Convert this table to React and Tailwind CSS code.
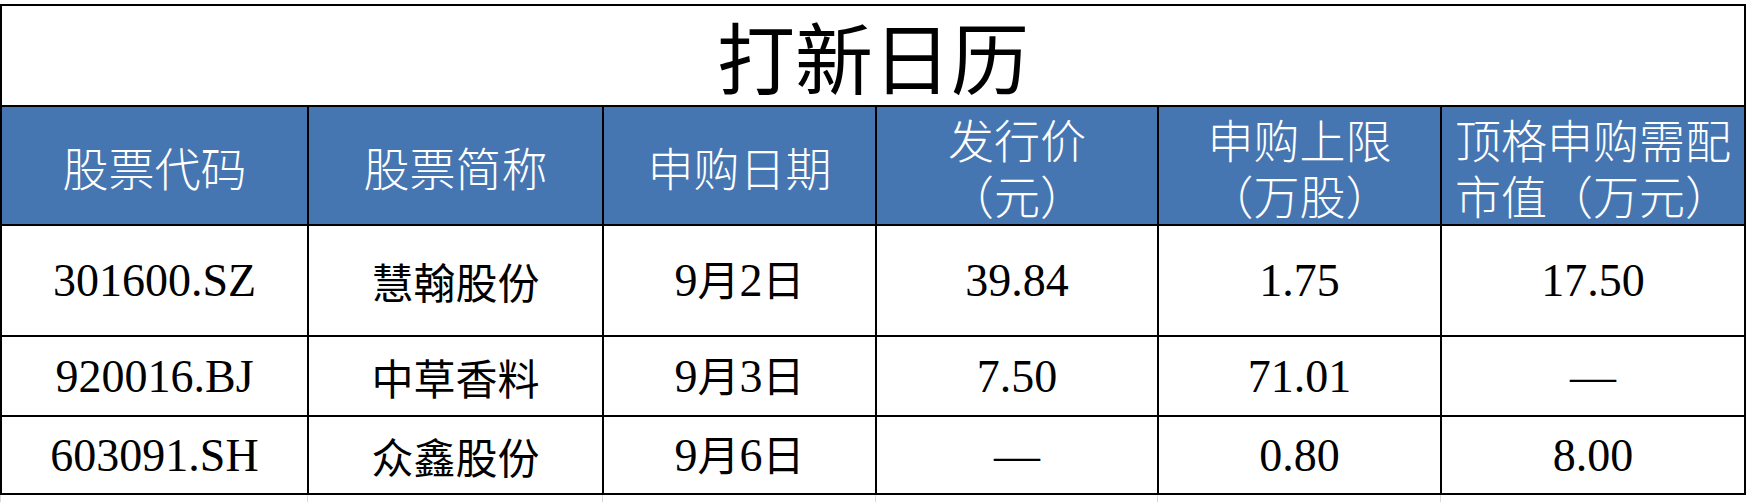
const rows = [
  { code: '301600.SZ', name: '慧翰股份', day: '2', price: '39.84', limit: '1.75', cap: '17.50', h: 'h-[109px]' },
  { code: '920016.BJ', name: '中草香料', day: '3', price: '7.50', limit: '71.01', cap: '—', h: 'h-[78px]' },
  { code: '603091.SH', name: '众鑫股份', day: '6', price: '—', limit: '0.80', cap: '8.00', h: 'h-[76px]' },
];

// spreadsheet export: header in blue, body numbers in Times-like serif
function Head({ children }) {
  return (
    <div className="h-[117px] bg-[#4676b2] text-white text-[46px] leading-[56px] font-light font-['Noto_Sans_CJK_SC','Noto_Sans',sans-serif] flex items-center justify-center text-center">
      <div>{children}</div>
    </div>
  );
}

function Cell({ children, h }) {
  return (
    <div className={`${h} bg-white text-black text-[46px] font-['Liberation_Serif','Noto_Sans_CJK_SC',serif] flex items-center justify-center`}>
      {children}
    </div>
  );
}

export default function App() {
  return (
    <div className="w-[1750px] h-[502px] bg-white overflow-hidden pt-1">
      <div className="w-[1746px] grid grid-cols-[305px_293px_271px_280px_281px_302px] gap-[2px] p-[2px] bg-black">
        <div className="col-span-6 h-[99px] bg-white flex items-center justify-center text-[78px] text-black font-['Noto_Sans_CJK_SC',sans-serif]">
          打新日历
        </div>

        <Head>股票代码</Head>
        <Head>股票简称</Head>
        <Head>申购日期</Head>
        <Head>
          发行价
          <br />
          （元）
        </Head>
        <Head>
          申购上限
          <br />
          （万股）
        </Head>
        <Head>
          顶格申购需配
          <br />
          市值（万元）
        </Head>

        {rows.map((r) => (
          <div key={r.code} className="contents">
            <Cell h={r.h}>{r.code}</Cell>
            <Cell h={r.h}>
              <span className="text-[42px] font-['Noto_Sans_CJK_SC',sans-serif]">{r.name}</span>
            </Cell>
            <Cell h={r.h}>
              <span>
                9<span className="text-[42px] font-['Noto_Sans_CJK_SC',sans-serif]">月</span>
                {r.day}
                <span className="text-[42px] font-['Noto_Sans_CJK_SC',sans-serif]">日</span>
              </span>
            </Cell>
            <Cell h={r.h}>{r.price}</Cell>
            <Cell h={r.h}>{r.limit}</Cell>
            <Cell h={r.h}>{r.cap}</Cell>
          </div>
        ))}
      </div>

      <div className="w-[1746px] h-[7px] grid grid-cols-[305px_293px_271px_280px_281px_302px] gap-[2px] px-[2px]">
        {[0, 1, 2, 3, 4, 5].map((i) => (
          <div key={i} className="border-l border-[#d9d9d9] -ml-[2px]" />
        ))}
      </div>
    </div>
  );
}
